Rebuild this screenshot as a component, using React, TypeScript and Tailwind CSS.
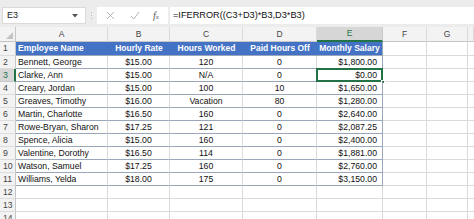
import React from "react";

const GRID = "grid grid-cols-[16px_92px_62px_73px_74px_66px_44px_41px_1fr]";
const LIGHT_R = "border-r border-r-[#dadada]";
const LIGHT_B = "border-b border-b-[#dadada]";
const TABLE_B = "border-b border-b-[#9aa6ba]";

const rows: string[][] = [
  ["Bennett, George", "$15.00", "120", "0", "$1,800.00"],
  ["Clarke, Ann", "$15.00", "N/A", "0", "$0.00"],
  ["Creary, Jordan", "$15.00", "100", "10", "$1,650.00"],
  ["Greaves, Timothy", "$16.00", "Vacation", "80", "$1,280.00"],
  ["Martin, Charlotte", "$16.50", "160", "0", "$2,640.00"],
  ["Rowe-Bryan, Sharon", "$17.25", "121", "0", "$2,087.25"],
  ["Spence, Alicia", "$15.00", "160", "0", "$2,400.00"],
  ["Valentine, Dorothy", "$16.50", "114", "0", "$1,881.00"],
  ["Watson, Samuel", "$17.25", "160", "0", "$2,760.00"],
  ["Williams, Yelda", "$18.00", "175", "0", "$3,150.00"],
];

function RowNum({ n, active }: { n: number; active?: boolean }) {
  return (
    <div
      className={
        active
          ? "flex items-center border-r-2 border-r-[#217346] border-b border-b-[#c8c8c8] bg-[#d6d6d6] pl-[3px] text-[#217346]"
          : "flex items-center border-r border-r-[#c6c6c6] border-b border-b-[#dcdcdc] bg-[#f3f3f3] pl-[3px] text-[#444]"
      }
    >
      {n}
    </div>
  );
}

function FormulaBar() {
  return (
    <div className="flex h-[27px] items-start bg-[#ececec] pt-[7px]">
      <div className="ml-[2px] flex h-[17px] w-[84px] items-center border border-[#dadada] bg-white pl-[4px] text-[9px] text-[#222]">
        <span>E3</span>
        <svg width="6" height="4" viewBox="0 0 6 4" className="ml-[54px]">
          <path d="M0 0 L6 0 L3 3.5 Z" fill="#555" />
        </svg>
      </div>
      <div className="flex h-[17px] w-[11px] flex-col items-center justify-center gap-[1.5px]">
        <span className="h-[1.5px] w-[1.5px] bg-[#b8b8b8]" />
        <span className="h-[1.5px] w-[1.5px] bg-[#b8b8b8]" />
        <span className="h-[1.5px] w-[1.5px] bg-[#b8b8b8]" />
      </div>
      <div className="flex h-[17px] w-[71px] items-center bg-white">
        <svg width="9" height="9" viewBox="0 0 9 9" className="ml-[9px]">
          <path d="M1 1 L8 8 M8 1 L1 8" stroke="#b5b5b5" strokeWidth="1" />
        </svg>
        <svg width="10" height="9" viewBox="0 0 10 9" className="ml-[15px]">
          <path d="M1 5 L3.8 8 L9 1" stroke="#b5b5b5" strokeWidth="1" fill="none" />
        </svg>
        <span className="ml-[13px] font-['Liberation_Serif'] text-[10px] italic text-[#555]">
          f<span className="text-[7px]">x</span>
        </span>
      </div>
      <div className="ml-[2px] flex h-[17px] flex-1 items-center bg-white pl-[3px] text-[9.2px] text-[#111]">
        =IFERROR((C3+D3)*B3,D3*B3)
      </div>
    </div>
  );
}

function ColHeaders() {
  const letters = ["A", "B", "C", "D", "E", "F", "G", ""];
  return (
    <div className={`${GRID} h-[15px] bg-[#f3f3f3] text-[8.5px] text-[#444]`}>
      <div className="relative border-r border-r-[#c6c6c6] border-b border-b-[#c6c6c6]">
        <svg width="7" height="7" viewBox="0 0 7 7" className="absolute bottom-[2px] right-[2px]">
          <path d="M7 0 L7 7 L0 7 Z" fill="#c4c4c4" />
        </svg>
      </div>
      {letters.map((l, i) =>
        l === "E" ? (
          <div
            key={i}
            className="flex items-center justify-center border-r border-r-[#c6c6c6] border-b-2 border-b-[#217346] bg-[#d6d6d6] text-[#217346]"
          >
            {l}
          </div>
        ) : (
          <div
            key={i}
            className="flex items-center justify-center border-r border-r-[#dadada] border-b border-b-[#c6c6c6]"
          >
            {l}
          </div>
        )
      )}
    </div>
  );
}

export default function App() {
  return (
    <div className="h-[219px] w-[474px] overflow-hidden bg-white font-['Liberation_Sans',Arial,sans-serif]">
      <FormulaBar />
      <ColHeaders />

      <div className={`${GRID} h-[14px] whitespace-nowrap text-[8.5px] leading-none`}>
        <RowNum n={1} />
        <div className={`flex items-center bg-[#4472c4] pl-[2px] font-bold text-white ${TABLE_B}`}>
          Employee Name
        </div>
        <div className={`flex items-center justify-center bg-[#4472c4] font-bold text-white ${TABLE_B}`}>
          Hourly Rate
        </div>
        <div className={`flex items-center justify-center bg-[#4472c4] font-bold text-white ${TABLE_B}`}>
          Hours Worked
        </div>
        <div className={`flex items-center justify-center bg-[#4472c4] font-bold text-white ${TABLE_B}`}>
          Paid Hours Off
        </div>
        <div className={`flex items-center justify-center border-r border-r-[#9aa6ba] bg-[#4472c4] font-bold text-white ${TABLE_B}`}>
          Monthly Salary
        </div>
        <div className={`${LIGHT_R} ${LIGHT_B}`} />
        <div className={`${LIGHT_R} ${LIGHT_B}`} />
        <div className={LIGHT_B} />
      </div>

      {rows.map((r, i) => (
        <div key={i} className={`${GRID} h-[13px] whitespace-nowrap text-[8.7px] leading-none text-[#111]`}>
          <RowNum n={i + 2} active={i === 1} />
          <div className={`flex items-center overflow-hidden pl-[2px] ${LIGHT_R} ${TABLE_B}`}>
            {r[0]}
          </div>
          <div className={`flex items-center justify-center ${LIGHT_R} ${TABLE_B}`}>{r[1]}</div>
          <div className={`flex items-center justify-center ${LIGHT_R} ${TABLE_B}`}>{r[2]}</div>
          <div className={`flex items-center justify-center ${LIGHT_R} ${TABLE_B}`}>{r[3]}</div>
          <div className={`relative flex items-center justify-end border-r border-r-[#9aa6ba] pr-[5px] ${TABLE_B}`}>
            {r[4]}
            {i === 1 && (
              <>
                <div className="absolute -top-[1px] -left-[1px] -right-[1px] -bottom-[1px] border-2 border-[#217346]" />
                <div className="absolute -bottom-[3px] -right-[3px] h-[4px] w-[4px] border border-white bg-[#217346]" />
              </>
            )}
          </div>
          <div className={`${LIGHT_R} ${LIGHT_B}`} />
          <div className={`${LIGHT_R} ${LIGHT_B}`} />
          <div className={LIGHT_B} />
        </div>
      ))}

      {[12, 13, 14].map((n) => (
        <div key={n} className={`${GRID} h-[13px] text-[8.5px] leading-none`}>
          <RowNum n={n} />
          {[0, 1, 2, 3, 4, 5, 6].map((c) => (
            <div key={c} className={`${LIGHT_R} ${LIGHT_B}`} />
          ))}
          <div className={LIGHT_B} />
        </div>
      ))}
    </div>
  );
}
